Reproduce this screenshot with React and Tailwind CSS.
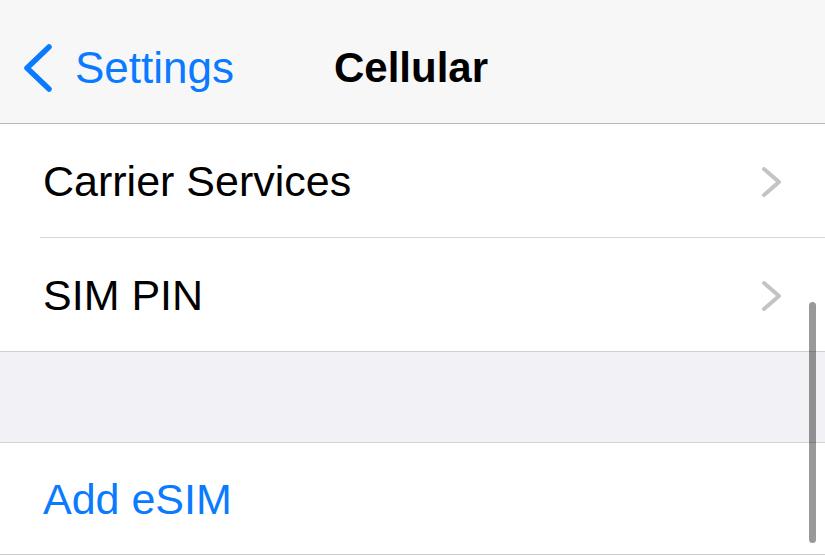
import React from "react";

function BackChevron() {
  return (
    <svg width="30" height="50" viewBox="0 0 30 50" fill="none" className="block">
      <polyline
        points="27,4 5,25 27,46"
        stroke="#0a7aff"
        strokeWidth="5.5"
        strokeLinecap="round"
        strokeLinejoin="round"
      />
    </svg>
  );
}

function RowChevron() {
  return (
    <svg width="22" height="32" viewBox="0 0 22 32" fill="none" className="block">
      <polyline
        points="3,3 18,16 3,29"
        stroke="#c4c4c7"
        strokeWidth="4"
        strokeLinecap="round"
        strokeLinejoin="round"
      />
    </svg>
  );
}

function NavRow({ label, last }) {
  return (
    <div
      className={
        last
          ? "h-[114px] border-b border-[#cfcfd2] flex items-center justify-between pl-[43px] pr-[42px] pt-[2px]"
          : "h-[114px] ml-[40px] border-b border-[#d6d6d8] flex items-center justify-between pl-[3px] pr-[42px] pt-[2px]"
      }
    >
      <span className="text-[43px] leading-none text-black">{label}</span>
      <RowChevron />
    </div>
  );
}

export default function App() {
  return (
    <div className="relative w-[825px] h-[556px] overflow-hidden bg-white font-['Liberation_Sans',Arial,sans-serif]">
      <header className="h-[124px] bg-[#f7f7f7] border-b border-[#b9b9bb] flex items-center pt-[12px]">
        <div className="flex items-center ml-[22px]">
          <BackChevron />
          <span className="ml-[23px] text-[44px] leading-none text-[#0a7aff]">Settings</span>
        </div>
        <span className="ml-[100px] text-[42px] leading-none font-bold text-black">Cellular</span>
      </header>

      <NavRow label="Carrier Services" />
      <NavRow label="SIM PIN" last />

      <div className="h-[91px] bg-[#f1f1f6] border-b border-[#d2d2d5]" />

      <div className="h-[112px] border-b border-[#cfcfd2] flex items-center pl-[43px] pt-[2px]">
        <span className="text-[43px] leading-none text-[#0a7aff]">Add eSIM</span>
      </div>

      <div className="absolute left-[809px] top-[302px] w-[7px] h-[241px] rounded-full bg-black/40" />
    </div>
  );
}
